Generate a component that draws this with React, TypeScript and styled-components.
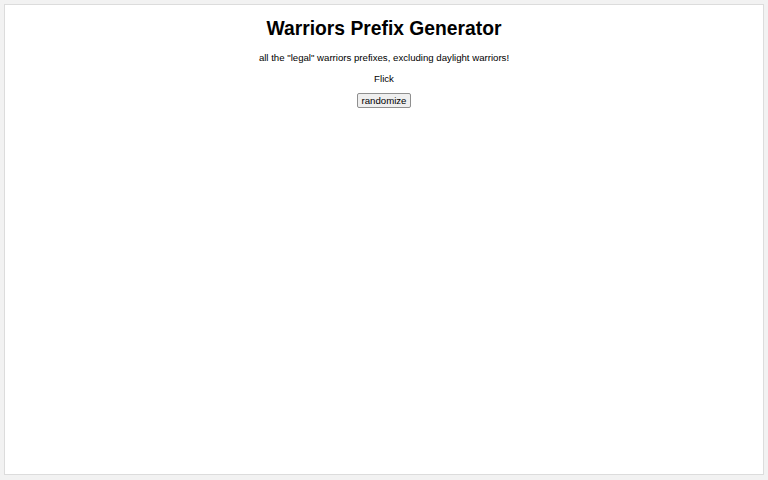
import React from "react";
import styled, { createGlobalStyle } from "styled-components";

const Global = createGlobalStyle`
  html, body { margin: 0; padding: 0; }
  body {
    background: #f2f2f2;
    font-family: "Liberation Sans", Arial, sans-serif;
  }
`;

const Frame = styled.div`
  box-sizing: border-box;
  width: 768px;
  height: 480px;
  padding: 4px 4px 5px 4px;
  display: flex;
`;

const Page = styled.main`
  flex: 1;
  background: #ffffff;
  border: 1px solid #dcdcdc;
  display: flex;
  flex-direction: column;
  align-items: center;
  padding-top: 13px;
`;

const Title = styled.h1`
  margin: 0;
  font-size: 19.3px;
  font-weight: bold;
  color: #000;
  line-height: 22px;
`;

const Caption = styled.p`
  margin: 12px 0 0;
  font-size: 9.65px;
  line-height: 11px;
  color: #000;
`;

const Result = styled.p`
  margin: 10px 0 0;
  font-size: 9.65px;
  line-height: 11px;
  color: #000;
`;

const Button = styled.button`
  margin-top: 9px;
  font-family: "Liberation Sans", Arial, sans-serif;
  font-size: 9.65px;
  line-height: 11px;
  padding: 1px 4px;
  background: #efefef;
  border: 1px solid #8f8f8f;
  border-radius: 2px;
  color: #000;
`;

export default function App() {
  return (
    <>
      <Global />
      <Frame>
        <Page>
          <Title>Warriors Prefix Generator</Title>
          <Caption>all the "legal" warriors prefixes, excluding daylight warriors!</Caption>
          <Result>Flick</Result>
          <Button>randomize</Button>
        </Page>
      </Frame>
    </>
  );
}
